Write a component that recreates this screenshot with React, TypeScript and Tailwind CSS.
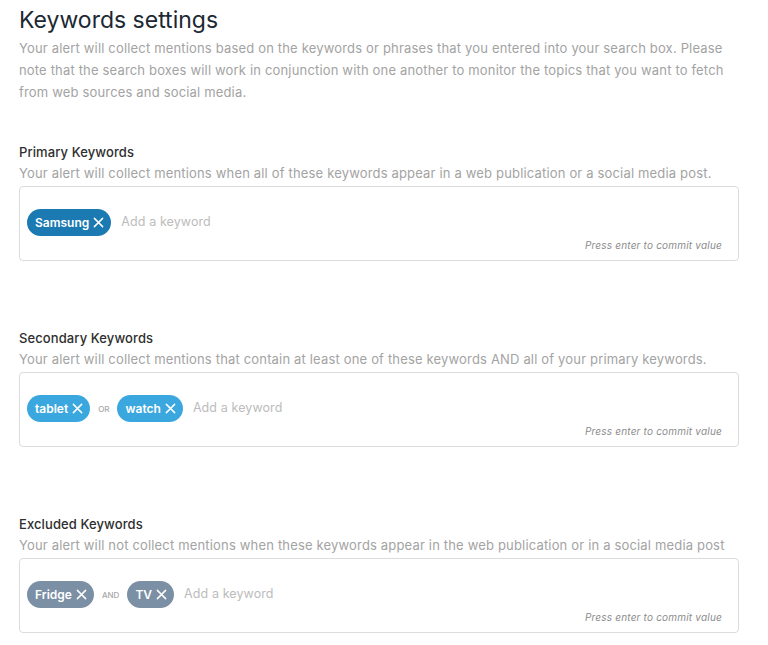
const font = { fontFamily: 'Inter, "Noto Sans", sans-serif' };

type Chip = { label: string };

function KeywordBox({
  chips,
  joiner,
  chipClass,
}: {
  chips: Chip[];
  joiner?: string;
  chipClass: string;
}) {
  return (
    <div className="mt-[2px] flex h-[75px] flex-col rounded-[4px] border border-[#dcdcdc] bg-white pl-[7px] pr-4 pt-[22px]">
      <div className="flex h-[27px] items-center">
        {chips.map((c, i) => (
          <div key={c.label} className="flex items-center">
            {i > 0 && joiner && (
              <span className="mx-[8px] text-[8px] font-medium text-[#a8a8a8]">{joiner}</span>
            )}
            <span
              className={`flex h-[27px] items-center gap-[4px] rounded-full pl-[8px] pr-[7px] text-[12px] font-semibold text-white ${chipClass}`}
            >
              {c.label}
              <svg width="11" height="11" viewBox="0 0 12 12" fill="none">
                <path d="M1.5 1.5l9 9M10.5 1.5l-9 9" stroke="white" strokeWidth="1.6" strokeLinecap="round" />
              </svg>
            </span>
          </div>
        ))}
        <span className="ml-[10px] text-[12.5px] tracking-[0.1px] text-[#bcbcbc]">Add a keyword</span>
      </div>
      <div className="mt-[3px] text-right text-[10px] italic leading-[12px] tracking-[0.2px] text-[#8c8c8c]">
        Press enter to commit value
      </div>
    </div>
  );
}

function Section({
  title,
  hint,
  children,
  className,
}: {
  title: string;
  hint: string;
  children: React.ReactNode;
  className?: string;
}) {
  return (
    <section className={className}>
      <h2 className="text-[13px] font-medium leading-[21px] tracking-[0.1px] text-[#2e2e2e]">{title}</h2>
      <p className="text-[13px] leading-[21px] tracking-[0.17px] text-[#a3a3a3]">{hint}</p>
      {children}
    </section>
  );
}

export default function App() {
  return (
    <div className="min-h-[645px] bg-white px-[19px] pt-[5px]" style={font}>
      <div className="w-[720px]">
        <h1 className="text-[23px] font-normal leading-[31px] text-[#1c2833]">Keywords settings</h1>
        <p className="mt-[1px] text-[13px] leading-[22px] tracking-[0.17px] text-[#a3a3a3]">
          Your alert will collect mentions based on the keywords or phrases that you entered into your search box. Please
          note that the search boxes will work in conjunction with one another to monitor the topics that you want to fetch
          from web sources and social media.
        </p>

        <Section
          className="mt-[39px]"
          title="Primary Keywords"
          hint="Your alert will collect mentions when all of these keywords appear in a web publication or a social media post."
        >
          <KeywordBox chips={[{ label: "Samsung" }]} chipClass="bg-[#1b7ab1]" />
        </Section>

        <Section
          className="mt-[67px]"
          title="Secondary Keywords"
          hint="Your alert will collect mentions that contain at least one of these keywords AND all of your primary keywords."
        >
          <KeywordBox chips={[{ label: "tablet" }, { label: "watch" }]} joiner="OR" chipClass="bg-[#3ba7df]" />
        </Section>

        <Section
          className="mt-[67px]"
          title="Excluded Keywords"
          hint="Your alert will not collect mentions when these keywords appear in the web publication or in a social media post"
        >
          <KeywordBox chips={[{ label: "Fridge" }, { label: "TV" }]} joiner="AND" chipClass="bg-[#7b8fa5]" />
        </Section>
      </div>
    </div>
  );
}
